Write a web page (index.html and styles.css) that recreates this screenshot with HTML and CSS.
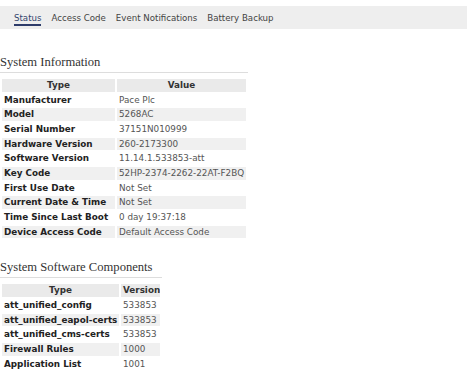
FILE: index.html
```html
<!DOCTYPE html>
<html>
<head>
<meta charset="utf-8">
<link rel="stylesheet" href="styles.css">
</head>
<body>
<nav class="tabs">
  <span class="tab active">Status</span>
  <span class="tab">Access Code</span>
  <span class="tab">Event Notifications</span>
  <span class="tab">Battery Backup</span>
</nav>

<section class="section first">
  <h2 class="title">System Information</h2>
  <table class="grid info">
    <colgroup><col class="c-type"><col></colgroup>
    <tr><th>Type</th><th>Value</th></tr>
    <tr><td class="k">Manufacturer</td><td class="v">Pace Plc</td></tr>
    <tr><td class="k">Model</td><td class="v">5268AC</td></tr>
    <tr><td class="k">Serial Number</td><td class="v">37151N010999</td></tr>
    <tr><td class="k">Hardware Version</td><td class="v">260-2173300</td></tr>
    <tr><td class="k">Software Version</td><td class="v">11.14.1.533853-att</td></tr>
    <tr><td class="k">Key Code</td><td class="v">52HP-2374-2262-22AT-F2BQ</td></tr>
    <tr><td class="k">First Use Date</td><td class="v">Not Set</td></tr>
    <tr><td class="k">Current Date &amp; Time</td><td class="v">Not Set</td></tr>
    <tr><td class="k">Time Since Last Boot</td><td class="v">0 day 19:37:18</td></tr>
    <tr><td class="k">Device Access Code</td><td class="v">Default Access Code</td></tr>
  </table>
</section>

<section class="section second">
  <h2 class="title">System Software Components</h2>
  <table class="grid comps">
    <colgroup><col class="c-type"><col></colgroup>
    <tr><th>Type</th><th>Version</th></tr>
    <tr><td class="k">att_unified_config</td><td class="v">533853</td></tr>
    <tr><td class="k">att_unified_eapol-certs</td><td class="v">533853</td></tr>
    <tr><td class="k">att_unified_cms-certs</td><td class="v">533853</td></tr>
    <tr><td class="k">Firewall Rules</td><td class="v">1000</td></tr>
    <tr><td class="k">Application List</td><td class="v">1001</td></tr>
  </table>
</section>
</body>
</html>
```

FILE: styles.css
```css
html, body {
  margin: 0;
  padding: 0;
  background: #ffffff;
}

body {
  font-family: "DejaVu Sans", Verdana, sans-serif;
  font-size: 8.8px;
  color: #333333;
}

.tabs {
  margin-top: 6px;
  width: 467px;
  box-sizing: border-box;
  padding: 5.5px 14px 3.5px;
  background: #eeeeee;
  display: flex;
  gap: 10px;
  height: 23px;
  font-size: 8.65px;
}

.tab {
  line-height: 12px;
  border-bottom: 2px solid transparent;
  color: #444444;
  white-space: nowrap;
}

.tab.active {
  color: #34456f;
  border-bottom-color: #2e3c6a;
}

.section {
  width: fit-content;
}

.section.first {
  margin-top: 25px;
}

.section.second {
  margin-top: 19px;
}

.title {
  margin: 0;
  font-family: "Liberation Serif", "Times New Roman", serif;
  font-weight: normal;
  font-size: 12.6px;
  line-height: 16px;
  color: #333333;
  padding-bottom: 2px;
  border-bottom: 1px solid #dddddd;
}

.grid {
  margin-top: 4px;
  border-collapse: separate;
  border-spacing: 2px;
  table-layout: fixed;
}

.info { width: 248px; }
.info .c-type { width: 113px; }

.comps { width: 162px; }
.comps .c-type { width: 117px; }

.grid th,
.grid td {
  padding: 0 2px;
  line-height: 12.65px;
  height: 12.65px;
  white-space: nowrap;
  overflow: hidden;
}

.grid th {
  text-align: center;
  font-weight: bold;
  color: #333333;
}

.grid tr:nth-child(odd) th {
  background: #eaeaea;
}

.grid tr:nth-child(odd) td {
  background: #f0f0f0;
}

.grid .k {
  font-weight: bold;
  color: #222222;
}

.grid .v {
  color: #555555;
}
```
